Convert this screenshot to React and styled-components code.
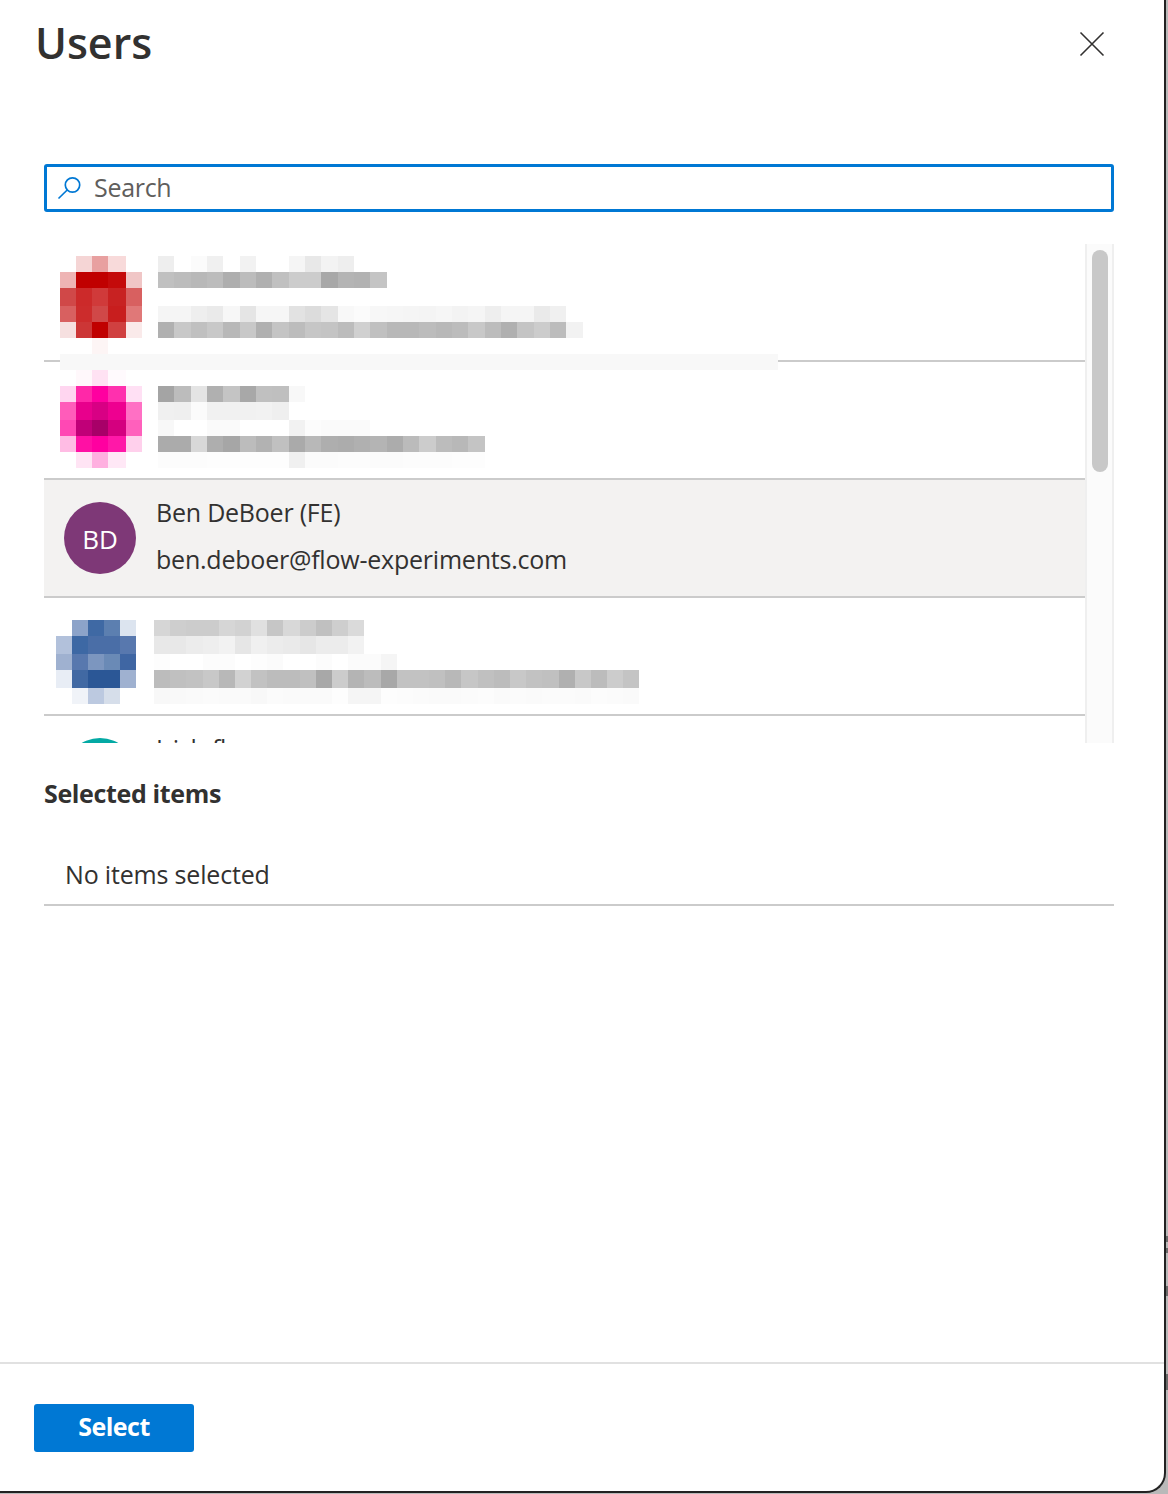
import React from 'react';
import styled, { createGlobalStyle } from 'styled-components';

const GlobalStyle = createGlobalStyle`
  html, body {
    margin: 0;
    padding: 0;
    background: #b9b9b9;
  }
  body {
    position: relative;
    font-family: "Open Sans", "Noto Sans", sans-serif;
    color: #323130;
  }
`;

const Panel = styled.div`
  box-sizing: border-box;
  width: 1166px;
  height: 1493px;
  display: flex;
  flex-direction: column;
  background: #fff;
  border-right: 2px solid #222;
  border-bottom: 2px solid #222;
  border-bottom-right-radius: 20px;
`;

const EdgeMark = styled.div`
  position: absolute;
  left: 1166px;
  top: ${(p) => p.$top}px;
  width: 2px;
  height: ${(p) => p.$height}px;
  background: #6a6a6a;
`;

const Header = styled.header`
  height: 164px;
  box-sizing: border-box;
  padding: 14px 59px 0 35px;
  display: flex;
  justify-content: space-between;
  align-items: flex-start;
`;

const Title = styled.h1`
  margin: 0;
  font-size: 43px;
  line-height: 58px;
  font-weight: 600;
`;

const CloseButton = styled.button`
  width: 26px;
  height: 26px;
  margin-top: 17px;
  padding: 0;
  border: none;
  background: none;
  color: #323130;
`;

const Body = styled.main`
  flex: 1;
  padding: 0 50px 0 44px;
`;

const SearchBox = styled.div`
  box-sizing: border-box;
  height: 48px;
  display: flex;
  align-items: center;
  gap: 11px;
  padding-left: 10px;
  border: 3px solid #0078d4;
  border-radius: 3px;
`;

const SearchText = styled.span`
  padding-bottom: 2px;
  font-size: 25px;
  letter-spacing: -0.3px;
  color: #605e5c;
`;

const ListWrap = styled.section`
  position: relative;
  height: 499px;
  margin-top: 32px;
  display: flex;
  overflow: hidden;
`;

const Rows = styled.div`
  flex: 1;
`;

const Row = styled.div`
  box-sizing: border-box;
  height: 118px;
  display: flex;
  align-items: flex-start;
  gap: ${(p) => p.$gap || 16}px;
  padding: ${(p) => p.$top}px 0 0 ${(p) => p.$left}px;
  background: ${(p) => (p.$active ? '#f3f2f1' : 'transparent')};
  border-bottom: 2px solid #cbcbcb;
`;

const Smudge = styled.div`
  position: absolute;
  left: 16px;
  top: 110px;
  width: 718px;
  height: 16px;
  background: #f8f8f8;
`;

const Avatar = styled.div`
  box-sizing: border-box;
  width: 72px;
  height: 72px;
  flex: none;
  display: flex;
  align-items: center;
  justify-content: center;
  padding-top: 2px;
  border-radius: 50%;
  background: ${(p) => p.$color};
  color: #fff;
  font-size: 26px;
`;

const Person = styled.div`
  margin-top: -13px;
  font-size: 25px;
  letter-spacing: -0.22px;
  line-height: 47px;
`;

const Track = styled.div`
  box-sizing: border-box;
  width: 29px;
  flex: none;
  padding: 6px 4px 0 5px;
  background: #fbfbfb;
  border-left: 2px solid #efefef;
  border-right: 2px solid #efefef;
`;

const Thumb = styled.div`
  height: 222px;
  background: #c8c8c8;
  border-radius: 8px;
`;

const SelectedTitle = styled.h2`
  margin: 32px 0 0;
  font-size: 25px;
  letter-spacing: -0.35px;
  line-height: 36px;
  font-weight: 700;
`;

const EmptyRow = styled.div`
  margin-top: 45px;
  padding: 0 0 12px 21px;
  font-size: 25px;
  letter-spacing: -0.18px;
  line-height: 36px;
  border-bottom: 2px solid #cbcbcb;
`;

const Footer = styled.footer`
  height: 129px;
  box-sizing: border-box;
  padding: 40px 0 0 34px;
  border-top: 2px solid #e1e1e1;
`;

const SelectButton = styled.button`
  width: 160px;
  height: 48px;
  padding: 0 0 4px;
  border: none;
  border-radius: 3px;
  background: #0078d4;
  color: #fff;
  font-family: inherit;
  font-size: 25px;
  letter-spacing: -0.5px;
  font-weight: 700;
`;

const MosaicSvg = styled.svg`
  display: block;
  flex: none;
  overflow: visible;
`;

// pixelated blocks from the blurred rows, colours read off the screenshot
const Mosaic = ({ xs, ys, cells }) => {
  const width = xs[xs.length - 1] - xs[0];
  const height = ys[ys.length - 1] - ys[0];
  return (
    <MosaicSvg width={width} height={height} viewBox={`0 0 ${width} ${height}`} shapeRendering="crispEdges">
      {cells.map((row, r) =>
        row.map((color, c) =>
          color ? (
            <rect
              key={`${r}-${c}`}
              x={xs[c] - xs[0]}
              y={ys[r] - ys[0]}
              width={xs[c + 1] - xs[c]}
              height={ys[r + 1] - ys[r]}
              fill={`#${color}`}
            />
          ) : null
        )
      )}
    </MosaicSvg>
  );
};

// gray rows: each shade is one cell
const grays = (list) =>
  list.split(' ').map((v) => (v === '-' ? null : v.repeat(3)));

const columns = (step) =>
  Array.from({ length: 31 }, (_, i) => Math.round(i * step));

const wideXs = columns(16.33);
const narrowXs = columns(16.18);

const topYs = [256, 272, 288, 306, 322, 338, 354];
const midYs = [370, 386, 402, 420, 436, 452, 468];
const lowYs = [620, 636, 654, 670, 688, 704];

const redAvatar = [
  [null, 'f5d5d5', 'e8a0a0', 'f8dada', null],
  ['eeb4b4', 'c00000', 'c00000', 'c40a0a', 'f0c6c6'],
  ['d04848', 'cc2a2a', 'd03a3a', 'c82222', 'd86060'],
  ['d86060', 'cc2c2c', 'd04848', 'c81e1e', 'e07878'],
  ['f6e0e0', 'cc3636', 'c00000', 'd04040', 'faeaea'],
  [null, null, 'fdf5f5', null, null],
];

const pinkAvatar = [
  [null, 'fff8fb', 'ffe2f3', 'fffafd', null],
  ['ffd6f0', 'ff28a8', 'ff00a0', 'ff30ae', 'ffe0f4'],
  ['ff5cba', 'e8008c', 'd80084', 'ee0090', 'ff70c4'],
  ['ff48b4', 'c00078', 'a80068', 'd4007f', 'ff60bc'],
  ['ffbce4', 'ff10a4', 'ff00a0', 'ff18a8', 'ffd0ec'],
  [null, 'ffe4f4', 'ffb0e0', 'ffe8f6', null],
];

const blueAvatar = [
  [null, '8ca3c9', '3f69a4', '5c7fb0', 'dce4ef'],
  ['b2c1db', '3d68a4', '4a6ea7', '4a6ea7', '5878ae'],
  ['9fb1d0', '5878ae', '7c96bf', '6a8ab6', '3f66a3'],
  ['e8edf5', '4169a3', '2b5796', '2b5796', '9fb1d0'],
  [null, 'f0f3f8', 'bcc9e0', 'd6deea', null],
];

const topText = [
  grays('ee ff fb f0 ff f2 ff ff f5 e8 f3 ee'),
  grays('c0 bc b8 bc ae bc b0 c0 cc cc a8 b4 b2 c4'),
  [],
  grays('f5 f5 ee ea f7 e5 f6 f6 e2 dc e5 f8 fb f7 f6 f5 f4 f6 f3 f5 ee f5 f5 ea f0'),
  grays('b0 c8 c0 c8 b8 c8 b0 c4 bc c6 c4 bc d0 c0 b8 b8 bc b8 bc c8 bc b0 c4 cc bc f2'),
  [],
];

const midText = [
  [],
  grays('a4 bc e4 b0 c4 a8 c0 bf f8'),
  grays('f0 ef fb f1 f1 f1 f2 ef'),
  grays('f8 ff ff fa fa ff ff ff f2 fc fa fa fa'),
  grays('ab ab d8 ae a6 bc b2 c0 aa b8 ae ac b0 b4 ac bb cc bc b8 c4'),
  grays('fc fc fc fd fd fd fd fd f0 fb fb fc fc fb fb fc fc fc fd fd'),
];

const lowText = [
  grays('d6 ce cc cc d6 d2 e0 c6 d8 cc c0 ce da'),
  grays('e8 e8 ec ee f2 e6 f0 ec ea e6 ec ec f2'),
  grays('fd ff ff fc fc ff fd fb ff ff fc ff fb fb f5'),
  grays('bc c0 c2 c8 b8 d2 c2 bc bc c0 a8 cc b4 bc a8 c2 c2 c0 b8 c6 c0 bc c8 c2 c0 b0 c8 bc cc c4'),
  grays('f8 f9 fa fb fa fa f8 fb fa fa fa fd f5 f5 fd fc fb fa fa fb fc fa fb fa fb fb fa fc fb fa'),
];

const avatarXs = [0, 16, 32, 48, 66, 82];
const blueXs = [0, 16, 32, 48, 64, 80];

export default function App() {
  return (
    <>
      <GlobalStyle />
      <Panel>
        <Header>
          <Title>Users</Title>
          <CloseButton aria-label="Close">
            <svg width="26" height="26" viewBox="0 0 26 26" fill="none" stroke="currentColor" strokeWidth="1.6">
              <path d="M1.5 1.5 24.5 24.5M24.5 1.5 1.5 24.5" />
            </svg>
          </CloseButton>
        </Header>
        <Body>
          <SearchBox>
            <svg width="26" height="24" viewBox="0 0 26 24" fill="none" stroke="#0078d4" strokeWidth="1.7">
              <circle cx="15.5" cy="9" r="7.2" />
              <path d="M10.2 14 1.5 22.5" />
            </svg>
            <SearchText>Search</SearchText>
          </SearchBox>
          <ListWrap>
            <Rows>
              <Row $top={12} $left={16}>
                <Mosaic xs={avatarXs} ys={topYs} cells={redAvatar} />
                <Mosaic xs={wideXs} ys={topYs} cells={topText} />
              </Row>
              <Row $top={8} $left={16}>
                <Mosaic xs={avatarXs} ys={midYs} cells={pinkAvatar} />
                <Mosaic xs={wideXs} ys={midYs} cells={midText} />
              </Row>
              <Row $active $top={22} $left={20} $gap={20}>
                <Avatar $color="#7e3877">BD</Avatar>
                <Person>
                  Ben DeBoer (FE)
                  <br />
                  ben.deboer@flow-experiments.com
                </Person>
              </Row>
              <Row $top={22} $left={12} $gap={18}>
                <Mosaic xs={blueXs} ys={lowYs} cells={blueAvatar} />
                <Mosaic xs={narrowXs} ys={lowYs} cells={lowText} />
              </Row>
              <Row $top={22} $left={20} $gap={20}>
                <Avatar $color="#03a9a4" />
                <Person>Irish fl</Person>
              </Row>
            </Rows>
            <Smudge />
            <Track>
              <Thumb />
            </Track>
          </ListWrap>
          <SelectedTitle>Selected items</SelectedTitle>
          <EmptyRow>No items selected</EmptyRow>
        </Body>
        <Footer>
          <SelectButton>Select</SelectButton>
        </Footer>
      </Panel>
      <EdgeMark $top={1236} $height={6} />
      <EdgeMark $top={1248} $height={5} />
      <EdgeMark $top={1286} $height={10} />
      <EdgeMark $top={1374} $height={16} />
    </>
  );
}
